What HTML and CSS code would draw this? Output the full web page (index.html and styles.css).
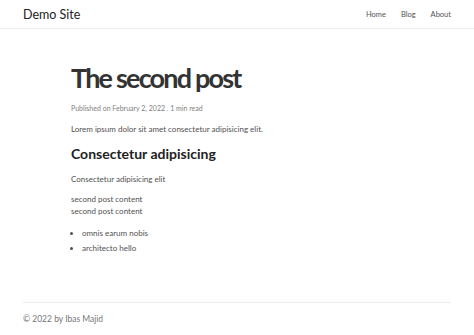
FILE: index.html
```html
<!DOCTYPE html>
<html lang="en">
<head>
  <meta charset="UTF-8">
  <title>The second post | Demo Site</title>
  <link rel="stylesheet" href="styles.css">
</head>
<body>
  <header class="site-header">
    <div class="wrapper header-row">
      <a class="brand" href="#">Demo Site</a>
      <nav class="nav">
        <a href="#">Home</a>
        <a href="#">Blog</a>
        <a href="#">About</a>
      </nav>
    </div>
  </header>

  <main class="post">
    <h1 class="post-title">The second post</h1>
    <p class="post-meta">Published on February 2, 2022 . 1 min read</p>
    <p>Lorem ipsum dolor sit amet consectetur adipisicing elit.</p>
    <h2>Consectetur adipisicing</h2>
    <p class="lead">Consectetur adipisicing elit</p>
    <p>second post content<br>second post content</p>
    <ul>
      <li>omnis earum nobis</li>
      <li>architecto hello</li>
    </ul>
  </main>

  <footer class="wrapper site-footer">
    <p>&copy; 2022 by Ibas Majid</p>
  </footer>
</body>
</html>
```

FILE: styles.css
```css
body {
  margin: 0;
  font-family: Lato, 'Open Sans', sans-serif;
  font-size: 8px;
  color: #505050;
  background: #fff;
}

a {
  color: #555;
  text-decoration: none;
}

.wrapper {
  padding: 0 23px;
}

.site-header {
  border-bottom: 1px solid #ececec;
}

.header-row {
  display: flex;
  align-items: center;
  justify-content: space-between;
  height: 28px;
}

.brand {
  font-size: 12.5px;
  color: #222;
}

.nav {
  display: flex;
  gap: 15px;
  font-size: 7.5px;
}

.post {
  max-width: 332px;
  margin: 0 auto;
  padding-top: 31px;
  min-height: 242px;
}

.post-title {
  font-size: 27px;
  font-weight: 700;
  letter-spacing: -1.8px;
  color: #333;
  margin: 0;
  line-height: 36px;
}

.post p {
  margin: 0 0 10px;
  line-height: 12px;
}

.post .post-meta {
  font-size: 7px;
  color: #808080;
  margin: 6px 0 9px;
}

.post .lead {
  margin-bottom: 8px;
}

.post h2 {
  font-size: 14px;
  color: #222;
  margin: 1px 0 11px;
}

.post ul {
  margin: -1px 0 0;
  padding-left: 11px;
}

.post li {
  line-height: 15px;
}

.site-footer p {
  border-top: 1px solid #ececec;
  margin: 0;
  padding-top: 11px;
  font-size: 8.5px;
  color: #777;
}
```
